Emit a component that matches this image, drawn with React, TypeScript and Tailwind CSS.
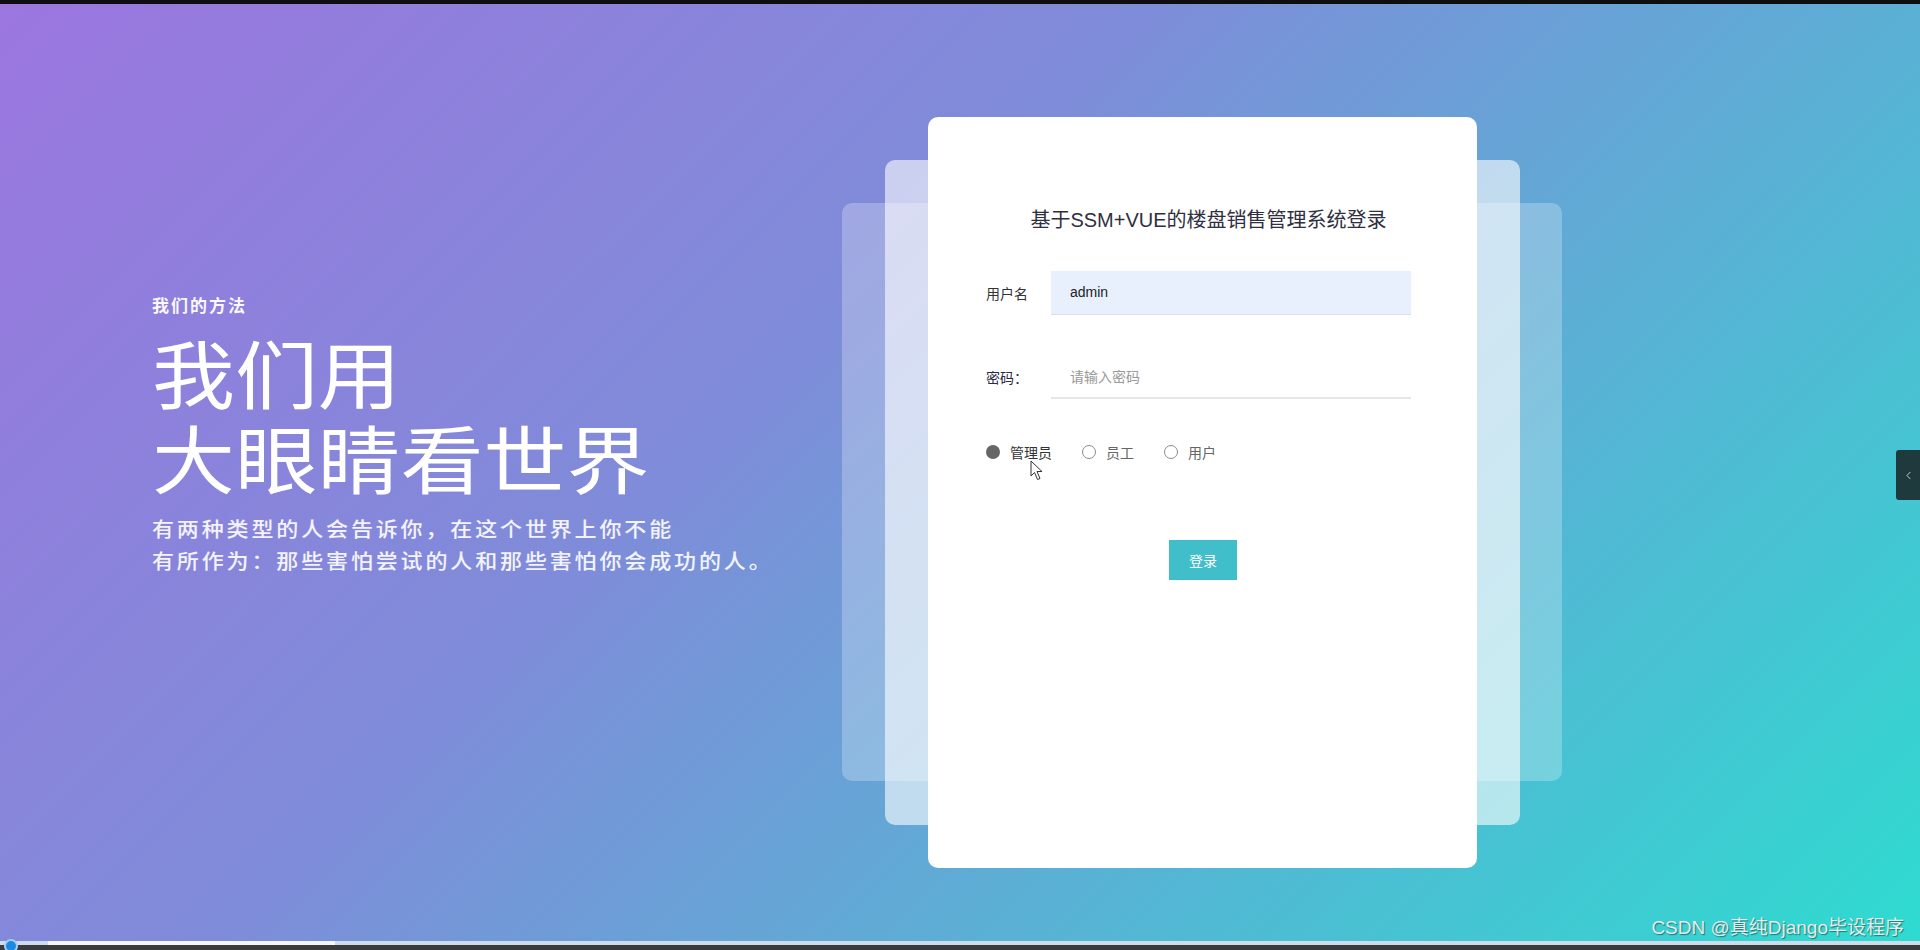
import { ChevronLeft } from "lucide-react";

const cjk = "font-['Noto_Sans_CJK_SC',sans-serif]";
const mixed = "font-['Liberation_Sans','Noto_Sans_CJK_SC',sans-serif]";

function Radio({ label, checked }: { label: string; checked?: boolean }) {
  return (
    <label className="flex items-center gap-[10px] cursor-pointer">
      {checked ? (
        <span className="w-[14px] h-[14px] rounded-full bg-[#666]" />
      ) : (
        <span className="w-[14px] h-[14px] rounded-full border border-[#8c8c8c] bg-white" />
      )}
      <span className={`text-[14px] leading-5 ${checked ? "text-[#333]" : "text-[#666]"}`}>{label}</span>
    </label>
  );
}

function LoginCard() {
  return (
    <div className="relative w-[720px] h-[751px] mt-[113px]">
      {/* layered sheets behind the card */}
      <div className="absolute left-0 top-[86px] w-[720px] h-[578px] rounded-[10px] bg-white/25" />
      <div className="absolute left-[43px] top-[43px] w-[635px] h-[665px] rounded-[10px] bg-white/60" />

      <div className={`relative ml-[86px] w-[549px] h-[751px] rounded-[10px] bg-white pt-[89px] ${cjk}`}>
        <div className={`pl-[12px] text-center text-[20px] leading-7 text-[#2f2f3f] ${mixed}`}>
          基于SSM+VUE的楼盘销售管理系统登录
        </div>

        <div className="pl-[58px] pr-[66px]">
          <div className="mt-[37px] flex items-center h-[44px]">
            <span className="w-[65px] text-[14px] text-[#333]">用户名</span>
            <div className="flex-1 h-[44px] flex items-center bg-[#e8f0fe] border-b border-[#dcdfe6] pl-[19px]">
              <span className={`text-[14px] text-[#222] ${mixed}`}>admin</span>
            </div>
          </div>

          <div className="mt-[40px] flex items-center h-[44px]">
            <span className="w-[65px] text-[14px] text-[#2a2a44]">密码：</span>
            <div className="flex-1 h-[44px] flex items-center bg-white border-b-2 border-[#e6e6e6] pl-[19px]">
              <span className="text-[14px] text-[#999]">请输入密码</span>
            </div>
          </div>

          <div className="mt-[43px] flex items-center gap-[30px] h-5">
            <Radio label="管理员" checked />
            <Radio label="员工" />
            <Radio label="用户" />
          </div>

          <div className="mt-[78px] flex justify-center pl-[9px]">
            <button className="w-[68px] h-[40px] bg-[#40bec9] text-white text-[14px]">登录</button>
          </div>
        </div>

        {/* mouse pointer from the capture */}
        <svg className="absolute left-[102px] top-[343px]" width="14" height="21" viewBox="0 0 14 21">
          <path d="M1 1 L1 16 L4.5 12.5 L7.5 19.5 L10 18.5 L7 11.5 L12 11.5 Z" fill="white" stroke="#333" strokeWidth="1" strokeLinejoin="round" />
        </svg>
      </div>
    </div>
  );
}

export default function App() {
  return (
    <div className="w-full h-[950px] flex flex-col overflow-hidden bg-[#3b3b3b]">
      <div className="h-[4px] bg-[#0e0e0e]" />

      <div className="relative flex-1 flex items-start bg-[linear-gradient(135deg,#9b76df_0%,#7f8cd9_40%,#2edbd0_100%)]">
        <div className={`w-[842px] pl-[152px] mt-[289px] text-white ${cjk}`}>
          <div className="text-[17px] leading-6 tracking-[2px] font-bold text-white/95">我们的方法</div>
          <div className="mt-[11px] text-[74px] leading-[85px] font-normal origin-left scale-x-[1.12]">
            <div>我们用</div>
            <div>大眼睛看世界</div>
          </div>
          <div className="mt-[15px] text-[20px] leading-[31.5px] tracking-[2.6px] font-medium text-white/90 origin-left scale-x-[1.1]">
            <div>有两种类型的人会告诉你，在这个世界上你不能</div>
            <div>有所作为：那些害怕尝试的人和那些害怕你会成功的人。</div>
          </div>
        </div>

        <LoginCard />

        <div className="absolute right-0 top-[446px] w-[24px] h-[50px] rounded-l-[3px] bg-[#1e3a3d] flex items-center justify-center">
          <ChevronLeft size={13} strokeWidth={1.5} className="text-white/90" />
        </div>

        <div className={`absolute right-[16px] bottom-[1px] text-[19px] leading-6 text-[#e4ecec] [text-shadow:1px_1px_1px_rgba(0,0,0,0.45)] ${mixed}`}>
          CSDN @真纯Django毕设程序
        </div>
      </div>

      <div className="relative h-[4px] flex bg-[#cddcea]">
        <div className="w-[48px]" />
        <div className="w-[287px] bg-[#f4f6f8]" />
        <div className="absolute left-[4px] top-[-2px] w-[14px] h-[14px] rounded-full bg-[#1e88e5] border-2 border-[#9fd0f5]" />
      </div>
      <div className="h-[5px] bg-[#3b3b3b]" />
    </div>
  );
}
